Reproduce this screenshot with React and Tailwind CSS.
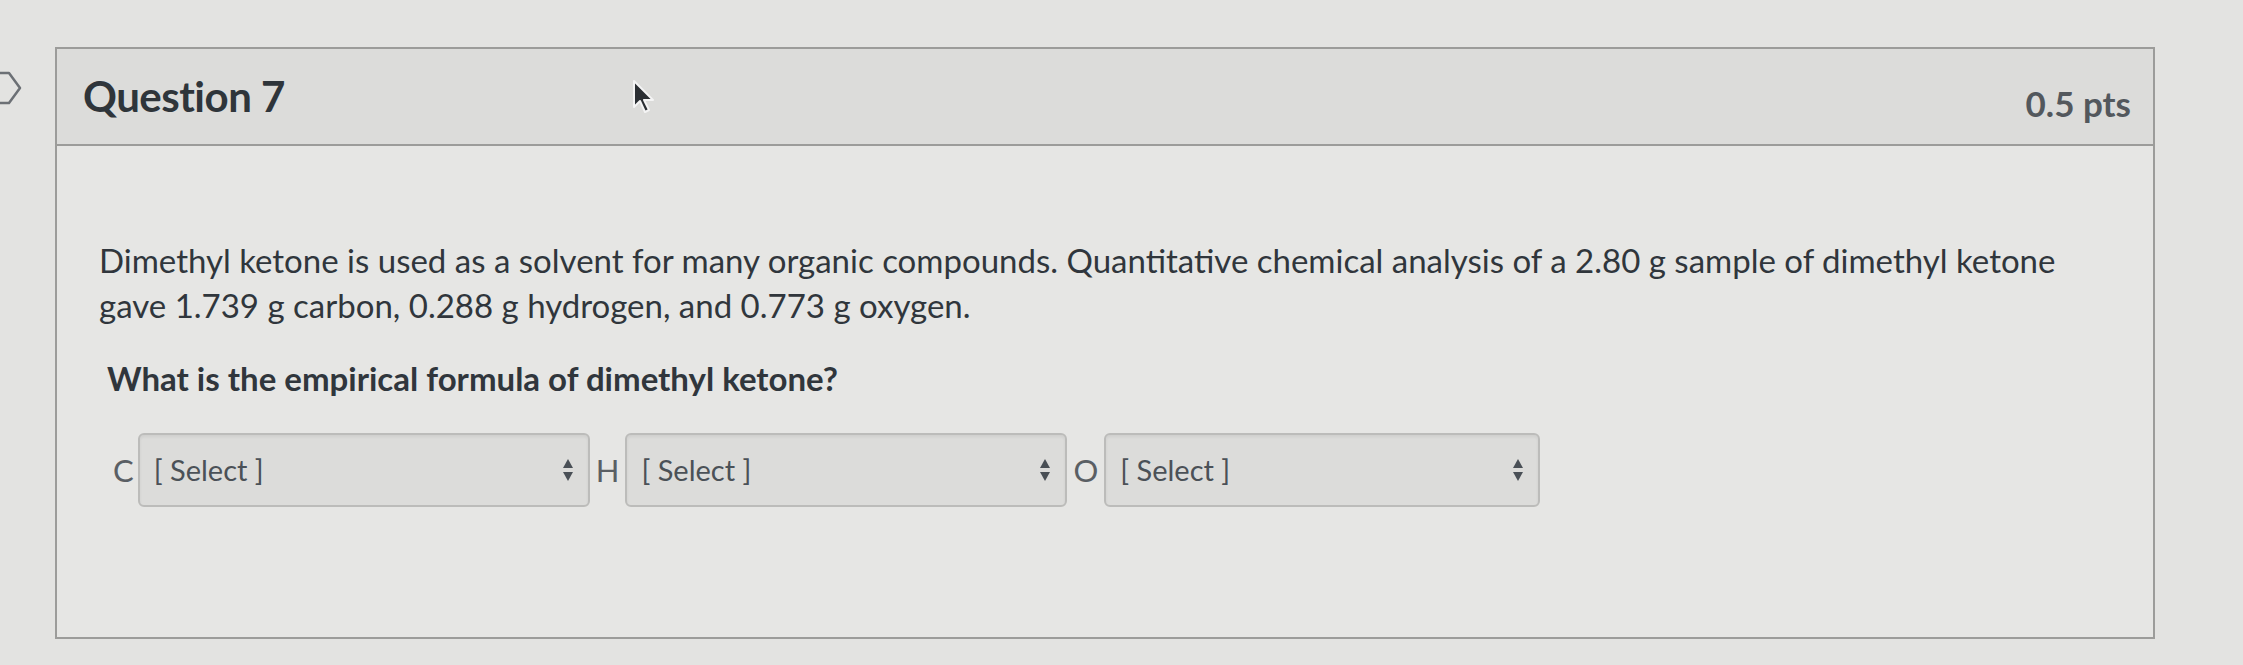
import React from "react";

function UpDown() {
  return (
    <svg width="12" height="26" viewBox="0 0 12 26" className="shrink-0">
      <path d="M6 2 L11 11 L1 11 Z" fill="#4a5056" />
      <path d="M6 24 L11 15 L1 15 Z" fill="#4a5056" />
    </svg>
  );
}

function Select({ w }) {
  return (
    <div
      className="flex h-[74px] items-center justify-between rounded-[6px] border-2 border-[#bcbcba] bg-[#dcdcda] pl-[14px] pr-[14px] shadow-[inset_0_2px_3px_rgba(0,0,0,0.06)]"
      style={{ width: w }}
    >
      <span className="text-[29px] text-[#4b5157]">[ Select ]</span>
      <UpDown />
    </div>
  );
}

export default function App() {
  return (
    <div
      className="relative h-[665px] w-[2243px] overflow-hidden bg-[#e3e3e1] text-[#30363c]"
      style={{ fontFamily: "Lato, 'Open Sans', sans-serif" }}
    >
      {/* left chevron */}
      <svg className="absolute left-0 top-[70px]" width="24" height="36" viewBox="0 0 24 36">
        <path d="M0 3 L9 3 L20 18 L9 33 L0 33" fill="none" stroke="#6c7075" strokeWidth="2.5" strokeLinejoin="round" />
      </svg>

      {/* cursor */}
      <svg className="absolute left-[632px] top-[78px]" width="26" height="38" viewBox="0 0 26 36">
        <path d="M2 2 L2 28 L8 22 L13 33 L17 31 L12 21 L21 21 Z" fill="#2b2f33" stroke="#f4f4f4" strokeWidth="2" strokeLinejoin="round" />
      </svg>

      <div className="ml-[55px] mt-[47px] flex h-[592px] w-[2100px] flex-col border-2 border-[#9c9c9a]">
        <div className="flex h-[97px] items-center justify-between border-b-2 border-[#9c9c9a] bg-[#dcdcda] pl-[26px] pr-[22px]">
          <span className="text-[42px] font-bold tracking-[-0.5px] text-[#2f353a]">Question 7</span>
          <span className="mt-[14px] text-[35px] font-bold text-[#53585d]">0.5 pts</span>
        </div>
        <div className="flex-1 bg-[#e6e6e4] pl-[42px] pt-[92px]">
          <p className="text-[33px] leading-[45px] text-[#30363c]">
            Dimethyl ketone is used as a solvent for many organic compounds. Quantitative chemical analysis of a 2.80 g sample of dimethyl ketone
            <br />
            gave 1.739 g carbon, 0.288 g hydrogen, and 0.773 g oxygen.
          </p>
          <p className="mt-[28px] pl-[8px] text-[33px] font-bold leading-[45px] text-[#30363c]">
            What is the empirical formula of dimethyl ketone?
          </p>
          <div className="mt-[32px] flex items-center pl-[14px] text-[31px] text-[#5a5f64]">
            <span className="mr-[4px]">C</span>
            <Select w={452} />
            <span className="ml-[6px] mr-[6px]">H</span>
            <Select w={442} />
            <span className="ml-[6px] mr-[6px]">O</span>
            <Select w={436} />
          </div>
        </div>
      </div>
    </div>
  );
}
